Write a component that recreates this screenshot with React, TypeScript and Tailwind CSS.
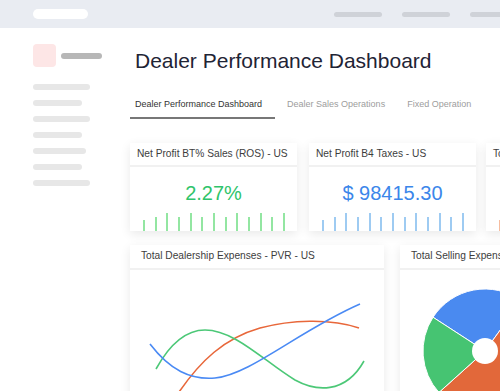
import React from "react";

const barHeights = [11, 14, 18, 14, 18, 14, 18, 14, 18, 14, 18, 14, 18];

function Bars({ color }: { color: string }) {
  return (
    <div className="mt-[10px] flex h-[18px] w-full items-end justify-between pl-[13px] pr-[12px]">
      {barHeights.map((h, i) => (
        <div key={i} className={`w-[2px] ${color}`} style={{ height: h }} />
      ))}
    </div>
  );
}

function KpiCard({
  title,
  value,
  valueColor,
  barColor,
  className,
}: {
  title: string;
  value: string;
  valueColor: string;
  barColor: string;
  className?: string;
}) {
  return (
    <div className={`w-[167px] shrink-0 bg-white shadow-[0_3px_10px_rgba(0,0,0,0.09)] ${className ?? ""}`}>
      <div className="flex h-[24px] items-center whitespace-nowrap border-b-2 border-[#f1f1f1] pl-[7px] text-[10.2px] leading-none text-[#3d3d3d]">
        {title}
      </div>
      <div className="flex h-[64px] flex-col items-center pt-[16px]">
        <div className={`h-[20px] whitespace-nowrap text-[20px] leading-[20px] ${valueColor}`}>{value}</div>
        <Bars color={barColor} />
      </div>
    </div>
  );
}

function LineChart() {
  return (
    <svg width="254" height="130" viewBox="130 270 254 130" className="block">
      <path
        d="M175,398 C200,360 225,338 260,328 C290,320 330,318 359,328"
        fill="none"
        stroke="#e8673a"
        strokeWidth="1.6"
      />
      <path
        d="M156,369 C172,340 188,330 205,330 C235,330 265,362 295,380 C315,391 345,395 364,361"
        fill="none"
        stroke="#4cc877"
        strokeWidth="1.6"
      />
      <path
        d="M150,344 C170,370 190,380 215,378 C250,375 300,330 360,304"
        fill="none"
        stroke="#4a8af4"
        strokeWidth="1.6"
      />
    </svg>
  );
}

function polar(cx: number, cy: number, r: number, deg: number) {
  const a = (deg * Math.PI) / 180;
  return [cx + r * Math.cos(a), cy + r * Math.sin(a)];
}

function wedge(cx: number, cy: number, r: number, a0: number, a1: number) {
  const [x0, y0] = polar(cx, cy, r, a0);
  const [x1, y1] = polar(cx, cy, r, a1);
  const large = a1 - a0 > 180 ? 1 : 0;
  return `M${cx},${cy} L${x0},${y0} A${r},${r} 0 ${large} 1 ${x1},${y1} Z`;
}

function PieChart() {
  const cx = 485;
  const cy = 351;
  const R = 62;
  return (
    <svg width="254" height="130" viewBox="400 270 254 130" className="block">
      <path d={wedge(cx, cy, R, 213, 306)} fill="#4a8af0" stroke="#fff" strokeWidth="1" />
      <path d={wedge(cx, cy, R, 306, 498)} fill="#e2683a" stroke="#fff" strokeWidth="1" />
      <path d={wedge(cx, cy, R, 138, 213)} fill="#46c472" stroke="#fff" strokeWidth="1" />
      <circle cx={cx} cy={cy} r="13" fill="#fff" />
    </svg>
  );
}

function ChartCard({ title, children, className }: { title: string; children: React.ReactNode; className?: string }) {
  return (
    <div className={`w-[254px] shrink-0 bg-white shadow-[0_3px_10px_rgba(0,0,0,0.09)] ${className ?? ""}`}>
      <div className="flex h-[25px] items-center whitespace-nowrap border-b-2 border-[#f1f1f1] pl-[11px] text-[10.2px] leading-none text-[#3d3d3d]">
        {title}
      </div>
      <div className="h-[140px]">{children}</div>
    </div>
  );
}

export default function App() {
  const sideWidths = ["w-[57px]", "w-[49px]", "w-[57px]", "w-[49px]", "w-[53px]", "w-[49px]", "w-[57px]"];
  return (
    <div className="h-[391px] w-[500px] overflow-hidden bg-white font-['Liberation_Sans',Arial,sans-serif]">
      <header className="flex h-[28px] items-center bg-[#e9ecf2]">
        <div className="ml-[33px] h-[10px] w-[55px] shrink-0 rounded-full bg-white" />
        <div className="ml-[246px] flex shrink-0 gap-[20px]">
          <div className="h-[5px] w-[48px] rounded-full bg-[#cfd2d8]" />
          <div className="h-[5px] w-[48px] rounded-full bg-[#cfd2d8]" />
          <div className="h-[5px] w-[48px] rounded-full bg-[#cfd2d8]" />
        </div>
      </header>
      <div className="flex">
        <aside className="w-[130px] shrink-0 pl-[33px] pt-[16px]">
          <div className="flex items-center">
            <div className="h-[23px] w-[23px] rounded-[4px] bg-[#fde6e6]" />
            <div className="ml-[5px] h-[6px] w-[41px] rounded-full bg-[#b7b7b7]" />
          </div>
          <div className="mt-[17px] flex flex-col gap-[10px]">
            {sideWidths.map((w, i) => (
              <div key={i} className={`h-[6px] rounded-full bg-[#e7e7e7] ${w}`} />
            ))}
          </div>
        </aside>
        <main className="min-w-0 flex-1 pt-[22px]">
          <h1 className="whitespace-nowrap pl-[5px] text-[21px] font-normal leading-[21px] text-[#1f2435]">
            Dealer Performance Dashboard
          </h1>
          <nav className="mt-[27px] flex whitespace-nowrap text-[9px] leading-[12px]">
            <div className="border-b-2 border-[#777] pb-[7px] pl-[5px] pr-[13px] text-[#333]">
              Dealer Performance Dashboard
            </div>
            <div className="ml-[12px] pb-[7px] text-[#9d9d9d]">Dealer Sales Operations</div>
            <div className="ml-[22px] pb-[7px] text-[#9d9d9d]">Fixed Operation</div>
          </nav>
          <div className="mt-[24px] flex">
            <KpiCard
              title="Net Profit BT% Sales (ROS) - US"
              value="2.27%"
              valueColor="text-[#2fc46b]"
              barColor="bg-[#93e6a2]"
            />
            <KpiCard
              className="ml-[12px]"
              title="Net Profit B4 Taxes - US"
              value="$ 98415.30"
              valueColor="text-[#3b86ea]"
              barColor="bg-[#9ecbf2]"
            />
            <KpiCard
              className="ml-[10px]"
              title="Total Gross Profit - US"
              value="$ 41260.75"
              valueColor="text-[#e2683a]"
              barColor="bg-[#f6bc9f]"
            />
          </div>
          <div className="mt-[14px] flex">
            <ChartCard title="Total Dealership Expenses - PVR - US">
              <LineChart />
            </ChartCard>
            <ChartCard className="ml-[16px]" title="Total Selling Expenses - US">
              <PieChart />
            </ChartCard>
          </div>
        </main>
      </div>
    </div>
  );
}
